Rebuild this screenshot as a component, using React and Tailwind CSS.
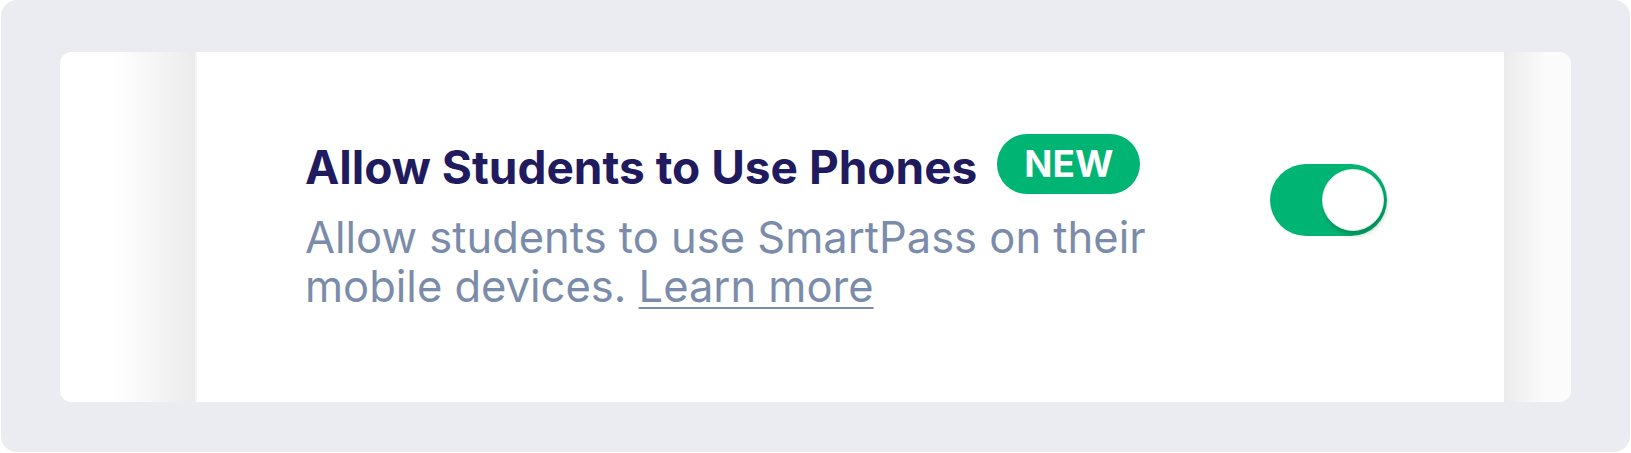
import React, { useState } from 'react';

const Toggle = ({ checked, onChange }) => (
  <button
    type="button"
    role="switch"
    aria-checked={checked}
    onClick={() => onChange(!checked)}
    className={`flex h-[72px] w-[117px] shrink-0 items-center rounded-full px-[3px] transition-colors ${
      checked ? 'justify-end bg-[#00b474]' : 'justify-start bg-[#d5d9e2]'
    }`}
  >
    <span className="block h-[62px] w-[62px] rounded-full border border-[#d8ece3] bg-white shadow-[2px_4px_5px_rgba(0,0,0,0.22)]" />
  </button>
);

const PhoneSetting = () => {
  const [enabled, setEnabled] = useState(true);

  return (
    <div className="flex flex-1 items-start justify-between bg-white pl-[108px] pr-[117px] pt-[82px]">
      <div className="max-w-[900px]">
        <div className="flex items-center gap-[20px]">
          <h3 className="text-[46px] font-bold leading-[52px] text-[#1f1b5e]">
            Allow Students to Use Phones
          </h3>
          <span className="mb-[6px] flex h-[60px] items-center rounded-full bg-[#00b474] px-[27px] text-[37px] font-bold text-white">
            NEW
          </span>
        </div>
        <p className="mt-[13px] text-[43.5px] leading-[49px] text-[#7b8cab]">
          Allow students to use SmartPass on their mobile devices.{' '}
          <a href="#" className="underline decoration-2 underline-offset-[5px]">
            Learn more
          </a>
        </p>
      </div>
      <div className="mt-[30px]">
        <Toggle checked={enabled} onChange={setEnabled} />
      </div>
    </div>
  );
};

export default function App() {
  return (
    <div className="h-[453px] bg-white px-[1px] font-['Inter','Noto_Sans',sans-serif]">
      <div className="h-[452px] rounded-2xl bg-[#ebecf1] px-[59px] pb-[50px] pt-[52px]">
        <div className="flex h-[350px] overflow-hidden rounded-xl bg-white">
          <div className="w-[135px] shrink-0 bg-gradient-to-r from-white from-40% to-[#ebebeb]" />
          <div className="w-[2px] shrink-0 bg-[#f6f6f6]" />
          <PhoneSetting />
          <div className="w-[67px] shrink-0 bg-gradient-to-r from-[#ebebeb] to-[#fbfbfb] to-60%" />
        </div>
      </div>
    </div>
  );
}
